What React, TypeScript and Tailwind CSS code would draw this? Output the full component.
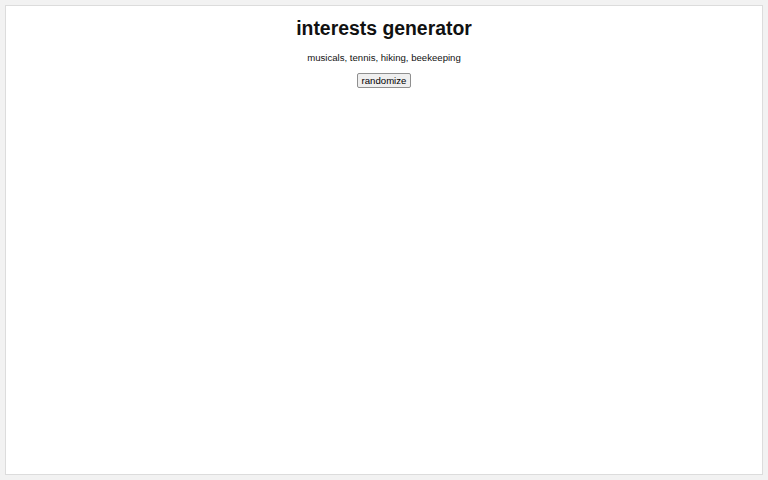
import React, { useState } from 'react';

const POOL = ['musicals', 'tennis', 'hiking', 'beekeeping', 'pottery', 'chess', 'surfing', 'baking', 'origami', 'jazz'];

export default function App() {
    const [interests, setInterests] = useState(['musicals', 'tennis', 'hiking', 'beekeeping']);

    const randomize = () => {
        const picked = [...POOL].sort(() => Math.random() - 0.5).slice(0, 4);
        setInterests(picked);
    };

    return (
        <div className="h-[480px] w-[768px] bg-[#f2f2f2] p-[5px] font-['Liberation_Sans',Arial,sans-serif]">
            <div className="flex h-[470px] flex-col items-center border border-[#dcdcdc] bg-white pt-[9px]">
                <h1 className="text-[19.4px] font-bold leading-[26px] text-[#111]">interests generator</h1>
                <p className="mt-[11px] text-[9.6px] leading-[12px] text-[#111]">{interests.join(', ')}</p>
                <button
                    onClick={randomize}
                    className="mt-[9px] h-[15px] rounded-[2px] border border-[#8f8f8f] bg-[#efefef] px-[4px] text-[9.6px] leading-[12px] text-black"
                >
                    randomize
                </button>
            </div>
        </div>
    );
}
